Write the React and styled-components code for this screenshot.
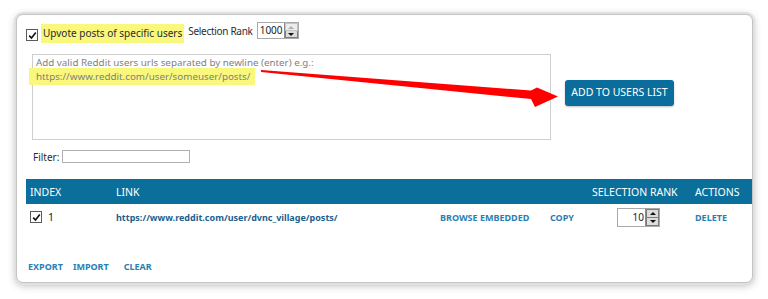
import React from 'react';
import styled, { createGlobalStyle } from 'styled-components';

const GlobalStyle = createGlobalStyle`
  html, body {
    margin: 0;
    padding: 0;
    background: #ffffff;
  }
  body {
    font-family: "Noto Sans", "Open Sans", sans-serif;
    color: #333;
  }
`;

const Page = styled.div`
  position: relative;
  width: 768px;
  height: 299px;
  overflow: hidden;
  box-sizing: border-box;
  padding: 14px 0 0 16px;
`;

const Card = styled.div`
  width: 737px;
  height: 269px;
  box-sizing: border-box;
  border: 1px solid #c4c4c4;
  border-radius: 7px;
  background: #fff;
  box-shadow: 0 0 0 2px #e0e0e0, 0 2px 9px rgba(0, 0, 0, 0.3);
  padding: 7px 0 0 9px;
  display: flex;
  flex-direction: column;
`;

const TopRow = styled.div`
  display: flex;
  align-items: flex-start;
  height: 22px;
`;

const CheckBox = styled.span`
  flex: none;
  width: 10px;
  height: 10px;
  border: 1px solid #5a5a5a;
  background: #fff;
  margin-top: ${p => p.$top || 0}px;
  display: flex;
  align-items: center;
  justify-content: center;
`;

const Highlight = styled.span`
  background: #f9f77c;
  font-size: 10px;
  color: #2b2b2b;
  line-height: 19px;
  height: 19px;
  padding: 0 2px 0 2px;
  margin: 2px 0 0 3px;
  white-space: nowrap;
`;

const Label = styled.span`
  font-size: 10px;
  color: #2b2b2b;
  line-height: 16px;
  letter-spacing: ${p => p.$ls || 0}px;
  margin: ${p => p.$mt || 0}px 0 0 ${p => p.$ml || 0}px;
  white-space: nowrap;
`;

const SpinBox = styled.div`
  display: flex;
  width: ${p => p.$w}px;
  height: ${p => p.$h}px;
  box-sizing: border-box;
  border: 1px solid #a9a9a9;
  background: #fff;
  margin: ${p => p.$mt || 0}px 0 0 ${p => p.$ml || 0}px;
`;

const SpinValue = styled.span`
  flex: 1;
  font-size: 10px;
  line-height: ${p => p.$h - 2}px;
  text-align: right;
  padding-right: 1px;
  color: #222;
  font-family: "Noto Sans", sans-serif;
`;

const SpinButtons = styled.div`
  width: 13px;
  display: flex;
  flex-direction: column;
  border-left: 1px solid #8a8a8a;
`;

const SpinHalf = styled.div`
  flex: 1;
  background: ${p => (p.$dim ? '#ececec' : '#dcdcdc')};
  border: 1px solid ${p => (p.$dim ? '#c4c4c4' : '#7c7c7c')};
  display: flex;
  align-items: center;
  justify-content: center;
  & + & { border-top: none; }
`;

const Tri = styled.span`
  width: 0;
  height: 0;
  border-left: 3px solid transparent;
  border-right: 3px solid transparent;
  ${p => (p.$down
    ? `border-top: 3px solid ${p.$dim ? '#b0b0b0' : '#111'};`
    : `border-bottom: 3px solid ${p.$dim ? '#b0b0b0' : '#111'};`)}
`;

const EntryRow = styled.div`
  display: flex;
  align-items: flex-start;
  margin-top: 10px;
`;

const UrlBox = styled.div`
  width: 519px;
  height: 86px;
  box-sizing: border-box;
  margin-left: 6px;
  border: 1px solid #cfcfcf;
  padding: 1px 3px;
  font-size: 9.8px;
  line-height: 13px;
  color: #7f7f7f;
`;

const UrlHint = styled.div`
  white-space: nowrap;
`;

const MarkedHint = styled.span`
  display: inline-block;
  background: #f9f77c;
  margin: 0 0 0 -7px;
  padding: 2px 5px 2px 7px;
  margin-top: -1px;
  white-space: nowrap;
`;

const PrimaryButton = styled.button`
  margin: 26px 0 0 14px;
  width: 109px;
  height: 26px;
  background: #0b6d9b;
  color: #fff;
  border: none;
  border-radius: 3px;
  box-shadow: 0 1px 2px rgba(0, 0, 0, 0.25);
  font-family: "Noto Sans", sans-serif;
  font-size: 10.5px;
  padding: 0 0 2px;
  cursor: pointer;
`;

const FilterRow = styled.div`
  display: flex;
  align-items: center;
  margin: 10px 0 0 7px;
  height: 13px;
`;

const FilterInput = styled.div`
  width: 128px;
  height: 13px;
  box-sizing: border-box;
  border: 1px solid #b0b0b0;
  margin-left: 3px;
`;

const Table = styled.div`
  margin-top: 16px;
  display: flex;
  flex-direction: column;
`;

const Cols = styled.div`
  display: grid;
  grid-template-columns: 90px 476px 103px 1fr;
  align-items: center;
`;

const HeadRow = styled(Cols)`
  background: #0b6f9c;
  height: 25px;
  color: #fff;
  font-size: 10.5px;
`;

const HeadCell = styled.span`
  padding-left: ${p => (p.$first ? 4 : 0)}px;
  white-space: nowrap;
`;

const BodyRow = styled(Cols)`
  height: 26px;
`;

const IndexCell = styled.div`
  display: flex;
  align-items: center;
  padding-left: 4px;
  font-size: 10.5px;
  color: #222;
  gap: 6px;
`;

const LinkCell = styled.div`
  display: grid;
  grid-template-columns: 324px 110px 1fr;
  align-items: center;
`;

const ActionLink = styled.a`
  font-size: 9px;
  font-weight: 700;
  color: ${p => (p.$dark ? '#1b5f8e' : '#2a80b3')};
  text-decoration: none;
  white-space: nowrap;
  margin-left: ${p => p.$ml || 0}px;
`;

const Footer = styled.div`
  display: flex;
  align-items: center;
  margin: 30px 0 0 2px;
`;

const Arrow = styled.svg`
  position: absolute;
  left: 0;
  top: 0;
  pointer-events: none;
`;

const Check = () => (
  <svg width="9" height="9" viewBox="0 0 9 9">
    <path d="M1.2 4.6 L3.5 7 L7.8 1.6" fill="none" stroke="#111" strokeWidth="1.6" />
  </svg>
);

const Spinner = ({ value, w, h, mt, ml, dimUp }) => (
  <SpinBox $w={w} $h={h} $mt={mt} $ml={ml}>
    <SpinValue $h={h}>{value}</SpinValue>
    <SpinButtons>
      <SpinHalf $dim={dimUp}><Tri $dim={dimUp} /></SpinHalf>
      <SpinHalf><Tri $down /></SpinHalf>
    </SpinButtons>
  </SpinBox>
);

export default function App() {
  return (
    <>
      <GlobalStyle />
      <Page>
        <Card>
          <TopRow>
            <CheckBox $top={7}><Check /></CheckBox>
            <Highlight>Upvote posts of specific users</Highlight>
            <Label $mt={1} $ml={4} $ls={-0.3}>Selection Rank</Label>
            <Spinner value="1000" w={42} h={17} ml={4} dimUp />
          </TopRow>

          <EntryRow>
            <UrlBox>
              <UrlHint>Add valid Reddit users urls separated by newline (enter) e.g.:</UrlHint>
              <MarkedHint>https://www.reddit.com/user/someuser/posts/</MarkedHint>
            </UrlBox>
            <PrimaryButton>ADD TO USERS LIST</PrimaryButton>
          </EntryRow>

          <FilterRow>
            <Label>Filter:</Label>
            <FilterInput />
          </FilterRow>

          <Table>
            <HeadRow>
              <HeadCell $first>INDEX</HeadCell>
              <HeadCell>LINK</HeadCell>
              <HeadCell>SELECTION RANK</HeadCell>
              <HeadCell>ACTIONS</HeadCell>
            </HeadRow>
            <BodyRow>
              <IndexCell>
                <CheckBox><Check /></CheckBox>
                1
              </IndexCell>
              <LinkCell>
                <ActionLink $dark>https://www.reddit.com/user/dvnc_village/posts/</ActionLink>
                <ActionLink>BROWSE EMBEDDED</ActionLink>
                <ActionLink>COPY</ActionLink>
              </LinkCell>
              <div>
                <Spinner value="10" w={43} h={19} ml={25} />
              </div>
              <ActionLink>DELETE</ActionLink>
            </BodyRow>
          </Table>

          <Footer>
            <ActionLink>EXPORT</ActionLink>
            <ActionLink $ml={10}>IMPORT</ActionLink>
            <ActionLink $ml={15}>CLEAR</ActionLink>
          </Footer>
        </Card>

        <Arrow width="768" height="299" viewBox="0 0 768 299">
          <polygon
            points="261,70 531,90.5 537,87.5 558,96.5 535,107 531,99 261,72"
            fill="#ff0000"
          />
        </Arrow>
      </Page>
    </>
  );
}
